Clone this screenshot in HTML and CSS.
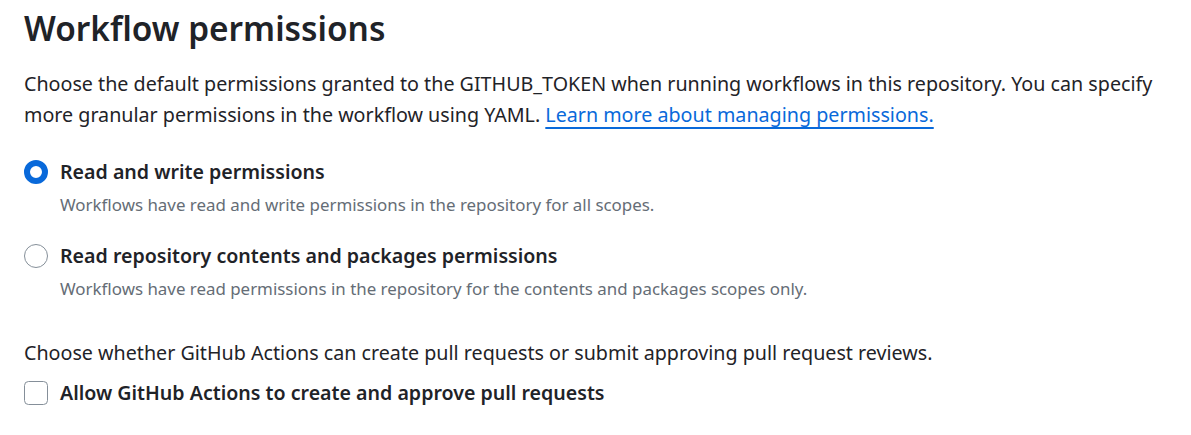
FILE: index.html
```html
<!DOCTYPE html>
<html lang="en">
<head>
<meta charset="utf-8">
<title>Workflow permissions</title>
<link rel="stylesheet" href="styles.css">
</head>
<body>
<main class="page">
  <h2 class="heading">Workflow permissions</h2>
  <p class="intro">Choose the default permissions granted to the GITHUB_TOKEN when running workflows in this repository. You can specify more granular permissions in the workflow using YAML. <a class="link" href="#">Learn more about managing permissions.</a></p>

  <div class="options">
    <label class="option">
      <input class="radio" type="radio" name="perm" checked>
      <span class="option-text">
        <span class="option-label">Read and write permissions</span>
        <span class="option-note">Workflows have read and write permissions in the repository for all scopes.</span>
      </span>
    </label>
    <label class="option">
      <input class="radio" type="radio" name="perm">
      <span class="option-text">
        <span class="option-label">Read repository contents and packages permissions</span>
        <span class="option-note">Workflows have read permissions in the repository for the contents and packages scopes only.</span>
      </span>
    </label>
  </div>

  <p class="question">Choose whether GitHub Actions can create pull requests or submit approving pull request reviews.</p>
  <label class="option option--check">
    <input class="checkbox" type="checkbox">
    <span class="option-text">
      <span class="option-label">Allow GitHub Actions to create and approve pull requests</span>
    </span>
  </label>
</main>
</body>
</html>
```

FILE: styles.css
```css
* { box-sizing: border-box; }

html, body {
  margin: 0;
  background: #ffffff;
}

body {
  font-family: "Noto Sans", "Open Sans", "Liberation Sans", sans-serif;
  color: #1f2328;
}

.page {
  width: 1167px;
  padding: 10px 0 0 24px;
}

.heading {
  margin: 0;
  font-size: 33.4px;
  line-height: 37.5px;
  font-weight: 600;
}

.intro {
  margin: 20px 0 0;
  font-size: 19.7px;
  line-height: 31.5px;
}

.link {
  color: #0969da;
  text-decoration: underline;
  text-decoration-thickness: 2px;
  text-underline-offset: 5px;
}

.options {
  display: flex;
  flex-direction: column;
  gap: 21.5px;
  margin-top: 25px;
}

.option {
  display: flex;
  align-items: flex-start;
  gap: 12px;
  cursor: pointer;
}

.option-text {
  display: flex;
  flex-direction: column;
  gap: 4px;
}

.option-label {
  font-size: 19.6px;
  line-height: 31.5px;
  font-weight: 600;
}

.option-note {
  font-size: 16.9px;
  line-height: 27px;
  color: #656d76;
}

.radio,
.checkbox {
  appearance: none;
  -webkit-appearance: none;
  margin: 4px 0 0;
  width: 24px;
  height: 24px;
  flex: none;
  background: #ffffff;
  border: 1.5px solid #858f99;
}

.radio {
  border-radius: 50%;
}

.radio:checked {
  border: 6.5px solid #0969da;
}

.checkbox {
  border-radius: 4.5px;
}

.question {
  margin: 34.5px 0 0;
  font-size: 19.7px;
  line-height: 31.5px;
}

.option--check {
  margin-top: 9px;
}
```
